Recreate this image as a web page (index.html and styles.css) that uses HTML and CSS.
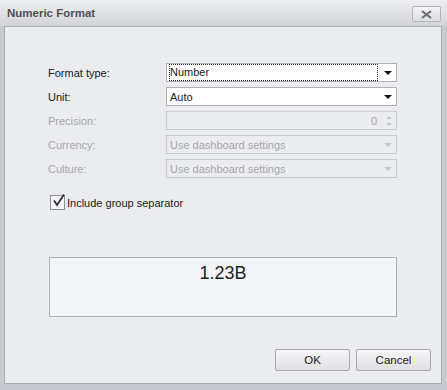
FILE: index.html
```html
<!DOCTYPE html>
<html lang="en">
<head>
  <meta charset="UTF-8">
  <title>Numeric Format</title>
  <link rel="stylesheet" href="styles.css">
</head>
<body>

  <div class="dialog">
    <div class="title-bar">
      <span class="title">Numeric Format</span>
      <button class="close-btn" type="button">
        <svg width="11" height="9" viewBox="0 0 11 9"><path d="M1 1 L10 8 M10 1 L1 8" stroke="#6a6d73" stroke-width="2.2"/></svg>
      </button>
    </div>

    <div class="panel">
      <div class="form-group">
        <label>Format type:</label>
        <div class="combo focused"><span class="value">Number</span><span class="arrow"></span></div>
      </div>

      <div class="form-group">
        <label>Unit:</label>
        <div class="combo"><span class="value">Auto</span><span class="arrow"></span></div>
      </div>

      <div class="form-group disabled">
        <label>Precision:</label>
        <div class="combo spin"><span class="value num">0</span><span class="spin-btns"><span class="up"></span><span class="down"></span></span></div>
      </div>

      <div class="form-group disabled">
        <label>Currency:</label>
        <div class="combo"><span class="value">Use dashboard settings</span><span class="arrow"></span></div>
      </div>

      <div class="form-group disabled">
        <label>Culture:</label>
        <div class="combo"><span class="value">Use dashboard settings</span><span class="arrow"></span></div>
      </div>

      <div class="check-row">
        <span class="checkbox">
          <svg width="15" height="15" viewBox="0 0 15 15"><path d="M3 7.5 L6 12 L13 1.5" fill="none" stroke="#2b2f36" stroke-width="1.8"/></svg>
        </span>
        <span>Include group separator</span>
      </div>

      <div class="preview">1.23B</div>

      <div class="button-group">
        <button type="button">OK</button>
        <button type="button">Cancel</button>
      </div>
    </div>
  </div>

</body>
</html>
```

FILE: styles.css
```css
body {
  margin: 0;
  font-family: "Liberation Sans", Arial, sans-serif;
  font-size: 11px;
  color: #202020;
}

.dialog {
  width: 447px;
  height: 390px;
  box-sizing: border-box;
  background: #c9cacf;
  padding: 0 5px 6px 4px;
  display: flex;
  flex-direction: column;
}

.title-bar {
  height: 26px;
  display: flex;
  align-items: center;
  justify-content: space-between;
  background: linear-gradient(#eeeff1, #d2d3d7);
  margin: 0 -5px 0 -4px;
  padding: 0 6px 0 7px;
}

.title {
  font-weight: bold;
  color: #4f5257;
  font-size: 11.5px;
}

.close-btn {
  width: 29px;
  height: 16px;
  margin-top: 2px;
  padding: 0;
  border: 1px solid #b3b5ba;
  border-radius: 2px;
  background: linear-gradient(#f4f4f6, #dcdde1);
  display: flex;
  align-items: center;
  justify-content: center;
}

.panel {
  flex: 1;
  background: #ebecef;
  border: 1px solid #a9abb0;
  padding: 36px 43px 0 43px;
  position: relative;
}

.form-group {
  display: flex;
  align-items: center;
  height: 19px;
  margin-bottom: 5px;
}

.form-group label {
  width: 118px;
}

.combo {
  width: 231px;
  height: 19px;
  box-sizing: border-box;
  background: #fff;
  border: 1px solid #aeb0b5;
  display: flex;
  align-items: center;
  padding: 0 4px 0 3px;
}

.combo.focused .value {
  outline: 1px dotted #222;
  flex: 1;
  margin-right: 7px;
  line-height: 15px;
}

.value {
  flex: 1;
}

.num {
  text-align: right;
  padding-right: 9px;
}

.arrow {
  width: 0;
  height: 0;
  border-left: 4px solid transparent;
  border-right: 4px solid transparent;
  border-top: 4px solid #111;
}

.disabled label,
.disabled .value {
  color: #a6a8ad;
}

.disabled .combo {
  background: #ebecef;
  border-color: #c9cbcf;
}

.disabled .arrow {
  border-top-color: #c6c8cc;
}

.spin-btns {
  display: flex;
  flex-direction: column;
  gap: 4px;
}

.spin-btns .up {
  border-left: 3px solid transparent;
  border-right: 3px solid transparent;
  border-bottom: 3px solid #c6c8cc;
}

.spin-btns .down {
  border-left: 3px solid transparent;
  border-right: 3px solid transparent;
  border-top: 3px solid #c6c8cc;
}

.check-row {
  display: flex;
  align-items: center;
  gap: 2px;
  margin-top: 17px;
  margin-left: 2px;
}

.checkbox {
  width: 13px;
  height: 13px;
  border: 1px solid #8e9197;
  background: #f4f4f6;
  position: relative;
}

.checkbox svg {
  position: absolute;
  left: 0;
  top: -3px;
}

.preview {
  margin-top: 47px;
  margin-left: 1px;
  width: 348px;
  height: 60px;
  box-sizing: border-box;
  background: #f3f4f7;
  border: 1px solid #adafb4;
  text-align: center;
  font-size: 18px;
  padding-top: 5px;
  color: #1d1f24;
}

.button-group {
  position: absolute;
  right: 10px;
  bottom: 12px;
  display: flex;
  gap: 6px;
}

.button-group button {
  width: 75px;
  height: 22px;
  font-family: inherit;
  font-size: 11.5px;
  color: #202020;
  border: 1px solid #a7a9ae;
  border-radius: 2px;
  background: linear-gradient(#f6f6f8, #dfe0e4);
}
```
